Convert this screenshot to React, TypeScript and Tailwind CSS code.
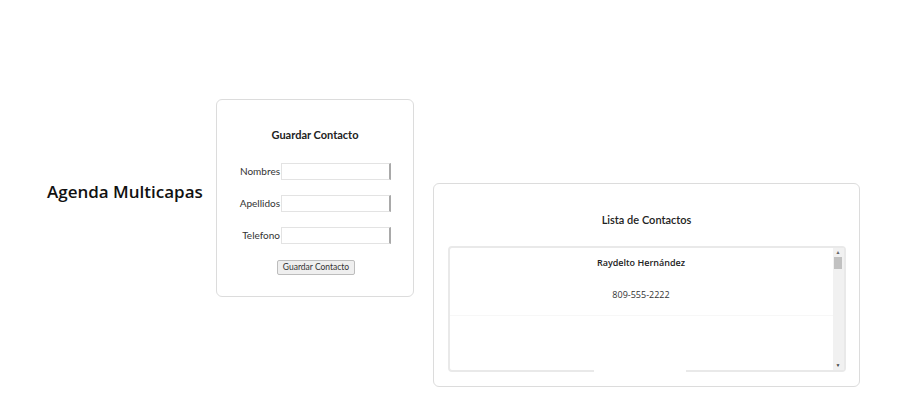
import React from "react";

const ubuntuish = { fontFamily: '"Open Sans", "Noto Sans", sans-serif' };

function Field({ label }: { label: string }) {
  return (
    <div className="flex items-center justify-end">
      <label className="text-[10px] text-[#333] font-['Lato',sans-serif]">{label}</label>
      <input
        type="text"
        className="ml-px h-[17px] w-[110px] border border-[#e3e3e3] border-r-2 border-r-[#a9a9a9] bg-white outline-none"
      />
    </div>
  );
}

function ContactForm() {
  return (
    <div className="w-[198px] h-[198px] rounded-md border border-[#dcdcdc] bg-white flex flex-col items-center pt-[27px]">
      <h2 className="text-[11px] font-bold text-[#222] font-['Lato',sans-serif]">
        Guardar Contacto
      </h2>
      <div className="mt-[19px] flex flex-col gap-[15px] w-full pr-[22px]">
        <Field label="Nombres" />
        <Field label="Apellidos" />
        <Field label="Telefono" />
      </div>
      <button className="mt-[16px] ml-[2px] h-[15px] px-[5px] text-[8.5px] leading-none text-[#333] bg-[#efefef] border border-[#bdbdbd] rounded-[2px] font-['Lato',sans-serif]">
        Guardar Contacto
      </button>
    </div>
  );
}

function ContactList() {
  return (
    <div className="w-[427px] h-[204px] rounded-md border border-[#dcdcdc] bg-white flex flex-col items-center pt-[28px]">
      <h2 className="text-[11px] font-semibold text-[#222] font-['Lato',sans-serif]">
        Lista de Contactos
      </h2>
      <div className="relative mt-[17px] w-[398px] h-[126px] rounded-[4px] border-2 border-[#e9e9e9] flex">
        <div className="flex-1 flex flex-col items-center">
          <div className="w-full border-b border-[#f7f7f7] flex flex-col items-center pt-[8px] h-[68px]">
            <p className="text-[9px] font-semibold text-[#222]" style={ubuntuish}>
              Raydelto Hernández
            </p>
            <p className="mt-[19px] text-[9px] text-[#333]" style={ubuntuish}>
              809-555-2222
            </p>
          </div>
        </div>
        <div className="w-[11px] bg-[#f1f1f1] flex flex-col items-center">
          <span className="text-[5px] leading-[9px] text-[#666]">▲</span>
          <div className="w-[8px] h-[12px] bg-[#c1c1c1]" />
          <div className="flex-1" />
          <span className="text-[5px] leading-[9px] text-[#444]">▼</span>
        </div>
        <div className="absolute -bottom-[2px] left-[144px] w-[92px] h-[3px] bg-white" />
      </div>
    </div>
  );
}

export default function App() {
  return (
    <div className="w-[897px] h-[396px] bg-white flex items-start">
      <div className="w-[216px] shrink-0 pl-[47px] pt-[179px]">
        <h1 className="text-[17px] font-semibold text-[#111] whitespace-nowrap" style={ubuntuish}>
          Agenda Multicapas
        </h1>
      </div>
      <div className="shrink-0 mt-[99px]">
        <ContactForm />
      </div>
      <div className="shrink-0 ml-[19px] mt-[183px]">
        <ContactList />
      </div>
    </div>
  );
}
